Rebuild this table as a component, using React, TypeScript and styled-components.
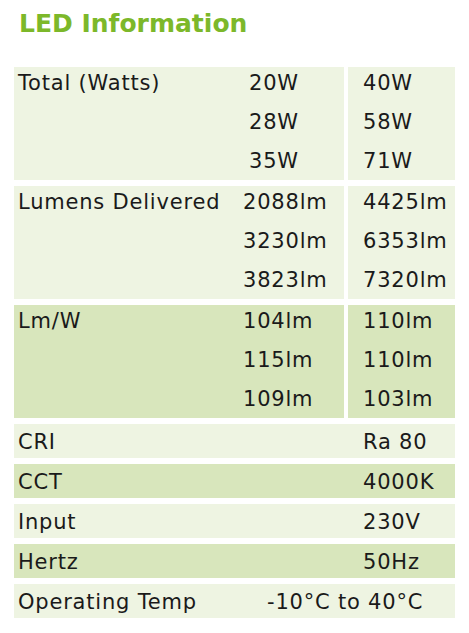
import * as React from "react";
import styled, { createGlobalStyle } from "styled-components";

const GlobalStyle = createGlobalStyle`
  body {
    margin: 0;
    background: #ffffff;
    font-family: "DejaVu Sans", "Liberation Sans", sans-serif;
    color: #1a1a1a;
  }
`;

const colors = {
  light: "#eef4e2",
  dark: "#d8e6bc",
  green: "#7cb82a",
};

const Page = styled.div`
  width: 469px;
  padding: 8px 14px 0;
  box-sizing: border-box;
`;

const Title = styled.h1`
  margin: 0 0 27px 5px;
  font-family: "DejaVu Sans", "Liberation Sans", sans-serif;
  font-weight: 700;
  font-size: 25px;
  line-height: 32px;
  color: ${colors.green};
`;

const Table = styled.div`
  display: flex;
  flex-direction: column;
  gap: 6px;
`;

const Group = styled.div`
  display: grid;
  grid-template-columns: 330px 107px;
  column-gap: 4px;
  height: 113px;
`;

const Cell = styled.div<{ $tone: "light" | "dark" }>`
  background: ${(p) => colors[p.$tone]};
  display: flex;
  box-sizing: border-box;
  padding-top: 1px;
`;

const Lines = styled.div<{ $x: number }>`
  display: flex;
  flex-direction: column;
  gap: 9px;
  padding-left: ${(p) => p.$x}px;
`;

const Text = styled.div`
  font-size: 21px;
  line-height: 30px;
  letter-spacing: 0.8px;
  white-space: nowrap;
`;

const Label = styled(Text)`
  width: 0;
  padding-left: 4px;
`;

const Row = styled.div<{ $tone: "light" | "dark" }>`
  background: ${(p) => colors[p.$tone]};
  height: 34px;
  display: flex;
  align-items: center;
  padding-top: 2px;
  box-sizing: border-box;
`;

const RowLabel = styled(Text)`
  padding-left: 4px;
  flex: 1;
`;

const RowValue = styled(Text)<{ $x: number }>`
  width: ${(p) => 441 - p.$x}px;
  flex: none;
`;

type GroupData = {
  label: string;
  tone: "light" | "dark";
  x: number;
  left: string[];
  right: string[];
};

const groups: GroupData[] = [
  {
    label: "Total (Watts)",
    tone: "light",
    x: 231,
    left: ["20W", "28W", "35W"],
    right: ["40W", "58W", "71W"],
  },
  {
    label: "Lumens Delivered",
    tone: "light",
    x: 225,
    left: ["2088lm", "3230lm", "3823lm"],
    right: ["4425lm", "6353lm", "7320lm"],
  },
  {
    label: "Lm/W",
    tone: "dark",
    x: 225,
    left: ["104lm", "115lm", "109lm"],
    right: ["110lm", "110lm", "103lm"],
  },
];

const rows: { label: string; value: string; tone: "light" | "dark"; x: number }[] = [
  { label: "CRI", value: "Ra 80", tone: "light", x: 349 },
  { label: "CCT", value: "4000K", tone: "dark", x: 349 },
  { label: "Input", value: "230V", tone: "light", x: 349 },
  { label: "Hertz", value: "50Hz", tone: "dark", x: 349 },
  { label: "Operating Temp", value: "-10°C to 40°C", tone: "light", x: 253 },
];

export default function App() {
  return (
    <Page>
      <GlobalStyle />
      <Title>LED Information</Title>
      <Table>
        {groups.map((g) => (
          <Group key={g.label}>
            <Cell $tone={g.tone}>
              <Label>{g.label}</Label>
              <Lines $x={g.x}>
                {g.left.map((v) => (
                  <Text key={v}>{v}</Text>
                ))}
              </Lines>
            </Cell>
            <Cell $tone={g.tone}>
              <Lines $x={15}>
                {g.right.map((v, i) => (
                  <Text key={i}>{v}</Text>
                ))}
              </Lines>
            </Cell>
          </Group>
        ))}
        {rows.map((r) => (
          <Row key={r.label} $tone={r.tone}>
            <RowLabel>{r.label}</RowLabel>
            <RowValue $x={r.x}>{r.value}</RowValue>
          </Row>
        ))}
      </Table>
    </Page>
  );
}
